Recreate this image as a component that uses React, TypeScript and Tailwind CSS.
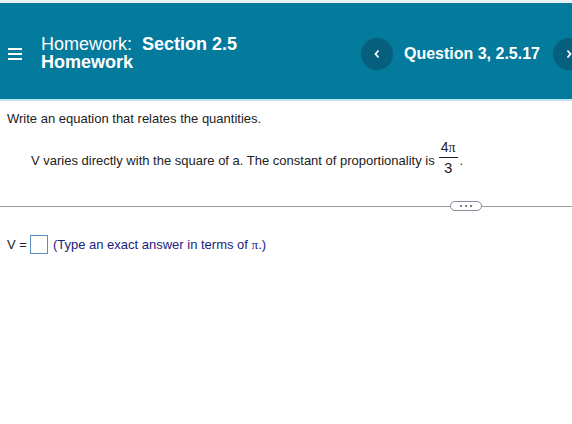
import React from "react";

export default function App() {
  return (
    <div className="w-[572px] h-[424px] bg-white overflow-hidden" style={{ fontFamily: '"Liberation Sans", Arial, sans-serif' }}>
      <div className="h-[3px] bg-[#e6f4f8]" />
      <div className="h-[96px] bg-[#047a9c] flex items-center relative">
        <div className="w-[41px] flex justify-center pl-[1px] pr-[12px] mt-[6px]">
          <div className="flex flex-col gap-[3px]">
            <div className="w-[14px] h-[2px] bg-white" />
            <div className="w-[14px] h-[2px] bg-white" />
            <div className="w-[14px] h-[2px] bg-white" />
          </div>
        </div>
        <div className="text-white text-[18px] leading-[18px] mt-[4px]">
          <div>Homework:&nbsp; <span className="font-bold">Section 2.5</span></div>
          <div className="font-bold">Homework</div>
        </div>
        <div className="ml-auto flex items-center mr-[-13px] mt-[5px]">
          <div className="w-[32px] h-[32px] rounded-full bg-[#065f7d] flex items-center justify-center text-white">
            <svg width="8" height="10" viewBox="0 0 8 10"><path d="M5.5 1.5 L2.5 5 L5.5 8.5" stroke="white" strokeWidth="1.8" fill="none" /></svg>
          </div>
          <div className="text-white font-bold text-[16px] ml-[11px] mr-[13px]">Question 3, 2.5.17</div>
          <div className="w-[32px] h-[32px] rounded-full bg-[#065f7d] flex items-center justify-center">
            <svg width="8" height="10" viewBox="0 0 8 10"><path d="M2.5 1.5 L5.5 5 L2.5 8.5" stroke="white" strokeWidth="1.8" fill="none" /></svg>
          </div>
        </div>
      </div>
      <div className="h-[2px] bg-[#bfe6f2]" />
      <div className="text-[13px] leading-[19px] text-[#222]">
        <div className="pl-[7px] pt-[8px]">Write an equation that relates the quantities.</div>
        <div className="pl-[31px] pt-[12px] flex items-start h-[47px]">
          <span className="mt-[11px]">V varies directly with the square of a. The constant of proportionality is</span>
          <span className="inline-flex flex-col items-center ml-[4px] text-[14px] leading-[15px]">
            <span className="px-[2px]">4<span style={{ fontFamily: '"Liberation Serif", serif' }}>π</span></span>
            <span className="w-full h-[1px] bg-[#222] my-[2px]" />
            <span className="text-[15px]">3</span>
          </span>
          <span className="ml-[2px] mt-[11px]">.</span>
        </div>
        <div className="relative mt-[26px] h-[10px] flex items-center">
          <div className="w-full h-[1px] bg-[#9a9a9a]" />
          <div className="absolute left-[450px] top-0 w-[32px] h-[10px] rounded-full border border-[#8a8a9a] bg-white flex items-center justify-center gap-[3px]">
            <span className="w-[2px] h-[2px] bg-[#555] rounded-full" />
            <span className="w-[2px] h-[2px] bg-[#555] rounded-full" />
            <span className="w-[2px] h-[2px] bg-[#555] rounded-full" />
          </div>
        </div>
        <div className="pl-[7px] pt-[24px] flex items-center">
          <span>V =</span>
          <span className="inline-block w-[18px] h-[19px] border border-[#5a8fc0] ml-[3px] bg-white" />
          <span className="ml-[5px] text-[#1a237e]">(Type an exact answer in terms of <span style={{ fontFamily: '"Liberation Serif", serif' }}>π</span>.)</span>
        </div>
      </div>
    </div>
  );
}
